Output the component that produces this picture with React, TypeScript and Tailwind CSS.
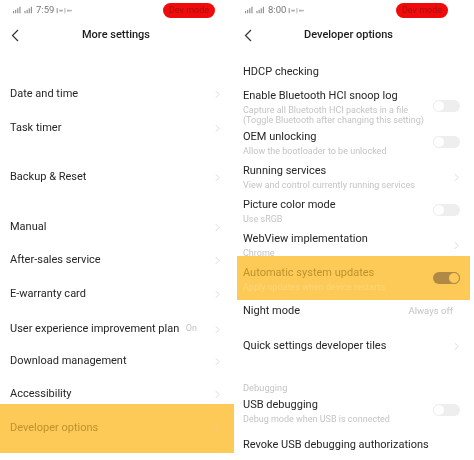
import React from 'react';

const Chevron = ({ className = '' }: { className?: string }) => (
  <svg viewBox="0 0 6 10" className={`w-[5px] h-[9px] shrink-0 ${className}`} fill="none" stroke="#d6d6d6" strokeWidth="1.1">
    <path d="M1 1l4 4-4 4" />
  </svg>
);

const Toggle = ({ on = false }: { on?: boolean }) => (
  <div className={`w-[27px] h-[12px] mb-[2px] rounded-full shrink-0 flex items-center ${on ? 'bg-[#b08a45] justify-end' : 'bg-[#eeeeee]'}`}>
    <div className={`w-[12px] h-[12px] rounded-full ${on ? 'bg-[#fdca58] border border-[#b08a45]' : 'bg-white border border-[#eeeeee]'}`} />
  </div>
);

const StatusBar = ({ time, className }: { time: string; className: string }) => (
  <div className={`h-[20px] flex items-center ${className}`}>
    <svg viewBox="0 0 28 9" className="w-[20px] h-[8px]" fill="#888">
      <path d="M0 6h1.5v3H0zM3 4h1.5v5H3zM6 2h1.5v7H6zM9 0h1.5v9H9zM16 6h1.5v3H16zM19 4h1.5v5H19zM22 2h1.5v7H22zM25 0h1.5v9H25z" />
    </svg>
    <span className="text-[9.5px] text-[#777] ml-[3px]">{time}</span>
    <svg viewBox="0 0 18 8" className="w-[17px] h-[7px] ml-[2px]" fill="#aaa">
      <path d="M0 1h1.5v6H0zM3 3h4v2H3zM9 1h1v6H9zM12 3h3v2h-3z" />
      <circle cx="16.5" cy="4" r="1" />
    </svg>
  </div>
);

const Pill = () => (
  <div className="w-[52px] h-[15px] rounded-full bg-[#ef0b0b] flex items-center justify-center text-[9px] text-[#a80f0f] whitespace-nowrap">
    Dev mode
  </div>
);

const Header = ({ title, titleClass }: { title: string; titleClass: string }) => (
  <div className="h-[30px] flex items-center">
    <svg viewBox="0 0 8 13" className="w-[8px] h-[13px] shrink-0" fill="none" stroke="#333" strokeWidth="1.2">
      <path d="M7 1L1.5 6.5 7 12" />
    </svg>
    <div className={`text-[11px] font-medium text-[#1c1c1c] ${titleClass}`}>{title}</div>
  </div>
);

const LeftRow = ({ label, className, extra }: { label: string; className: string; extra?: string }) => (
  <div className={`flex items-center text-[11px] text-[#262626] pl-[10px] pr-[14px] ${className}`}>
    <span className="flex-1 whitespace-nowrap">{label}</span>
    {extra && <span className="text-[9px] text-[#c4c4c4] mr-[18px]">{extra}</span>}
    <Chevron />
  </div>
);

const SubRow = ({ title, subs, className, right }: { title: string; subs: string[]; className: string; right: React.ReactNode }) => (
  <div className={`flex items-center pl-[6px] pr-[10px] ${className}`}>
    <div className="flex-1 whitespace-nowrap">
      <div className="text-[11px] leading-[14px] text-[#262626]">{title}</div>
      <div className="mt-[2px] text-[9px] leading-[10px] text-[#c4c4c4]">
        {subs.map((s) => (
          <div key={s}>{s}</div>
        ))}
      </div>
    </div>
    {right}
  </div>
);

export default function App() {
  return (
    <div className="w-[474px] h-[460px] bg-white flex overflow-hidden blur-[0.3px] font-['Roboto',sans-serif]">
      <div className="w-[234px] shrink-0">
        <StatusBar time="7:59" className="pl-[13px]" />
        <div className="h-0 flex justify-end pr-[19px]"><div className="-mt-[17px]"><Pill /></div></div>
        <div className="pl-[11px]"><Header title="More settings" titleClass="ml-[63px]" /></div>
        <LeftRow label="Date and time" className="h-[26px] mt-[31px]" />
        <LeftRow label="Task timer" className="h-[26px] mt-[8px]" />
        <LeftRow label="Backup & Reset" className="h-[26px] mt-[23px]" />
        <LeftRow label="Manual" className="h-[26px] mt-[24px]" />
        <LeftRow label="After-sales service" className="h-[26px] mt-[7px]" />
        <LeftRow label="E-warranty card" className="h-[26px] mt-[8px]" />
        <LeftRow label="User experience improvement plan" extra="On" className="h-[26px] mt-[9px]" />
        <LeftRow label="Download management" className="h-[26px] mt-[6px]" />
        <LeftRow label="Accessibility" className="h-[20px] mt-[10px]" />
        <div className="h-[49px] bg-[#fdca58] flex items-center pl-[10px] pr-[14px] text-[11px] text-[#bd922c]">
          <span className="flex-1">Developer options</span>
          <Chevron className="opacity-40" />
        </div>
      </div>

      <div className="w-[233px] ml-[3px] shrink-0">
        <StatusBar time="8:00" className="pl-[8px]" />
        <div className="h-0 flex justify-end pr-[22px]"><div className="-mt-[17px]"><Pill /></div></div>
        <div className="pl-[7px]"><Header title="Developer options" titleClass="ml-[52px]" /></div>
        <div className="pl-[6px] text-[11px] leading-[14px] text-[#262626] mt-[15px]">HDCP checking</div>
        <SubRow title="Enable Bluetooth HCI snoop log" subs={['Capture all Bluetooth HCI packets in a file', '(Toggle Bluetooth after changing this setting)']} className="mt-[10px]" right={<Toggle />} />
        <SubRow title="OEM unlocking" subs={['Allow the bootloader to be unlocked']} className="mt-[5px]" right={<Toggle />} />
        <SubRow title="Running services" subs={['View and control currently running services']} className="mt-[8px]" right={<Chevron className="mr-[1px]" />} />
        <SubRow title="Picture color mode" subs={['Use sRGB']} className="mt-[8px]" right={<Toggle />} />
        <SubRow title="WebView implementation" subs={['Chrome']} className="mt-[8px]" right={<Chevron className="mr-[1px]" />} />
        <div className="h-[44px] -mt-[2px] pt-[1px] bg-[#fdca58] flex items-center pl-[6px] pr-[10px]">
          <div className="flex-1 whitespace-nowrap">
            <div className="text-[11px] leading-[14px] text-[#bd922c]">Automatic system updates</div>
            <div className="mt-[2px] text-[9px] leading-[10px] text-[#fbd679]">Apply updates when device restarts</div>
          </div>
          <Toggle on />
        </div>
        <div className="flex items-center pl-[6px] pr-[17px] h-[22px] text-[11px] text-[#262626]">
          <span className="flex-1">Night mode</span>
          <span className="text-[9.5px] text-[#c4c4c4]">Always off</span>
        </div>
        <div className="flex items-center pl-[6px] pr-[10px] h-[20px] mt-[14px] text-[11px] text-[#262626]">
          <span className="flex-1">Quick settings developer tiles</span>
          <Chevron className="mr-[1px]" />
        </div>
        <div className="pl-[6px] text-[9.3px] leading-[11px] text-[#c4c4c4] mt-[26px]">Debugging</div>
        <SubRow title="USB debugging" subs={['Debug mode when USB is connected']} className="mt-[5px]" right={<Toggle />} />
        <div className="pl-[6px] text-[11px] leading-[14px] text-[#262626] mt-[14px] whitespace-nowrap">Revoke USB debugging authorizations</div>
      </div>
    </div>
  );
}
